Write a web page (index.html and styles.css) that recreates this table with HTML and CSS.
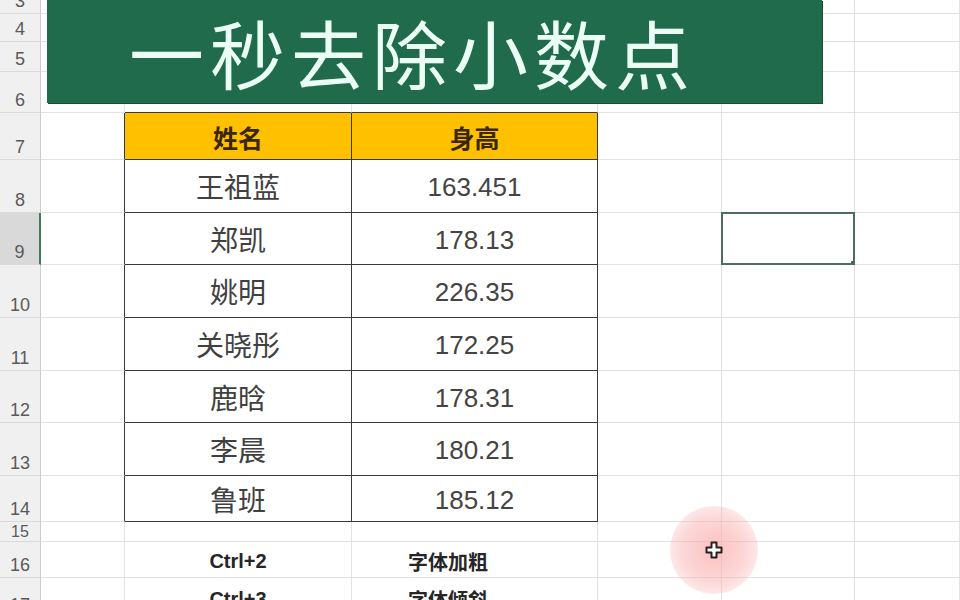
FILE: index.html
```html
<!DOCTYPE html>
<html lang="zh">
<head>
<meta charset="utf-8">
<title>一秒去除小数点</title>
<link rel="stylesheet" href="styles.css">
</head>
<body>
<div class="sheet">
  <!-- row 3 -->
  <div class="c rh">3</div><div class="c"></div><div class="c"></div><div class="c"></div><div class="c"></div><div class="c"></div><div class="c"></div>
  <!-- row 4 -->
  <div class="c rh">4</div><div class="c"></div><div class="c"></div><div class="c"></div><div class="c"></div><div class="c"></div><div class="c"></div>
  <!-- row 5 -->
  <div class="c rh">5</div><div class="c"></div><div class="c"></div><div class="c"></div><div class="c"></div><div class="c"></div><div class="c"></div>
  <!-- row 6 -->
  <div class="c rh">6</div><div class="c"></div><div class="c tt"></div><div class="c tt"></div><div class="c"></div><div class="c"></div><div class="c"></div>
  <!-- row 7 header -->
  <div class="c rh">7</div><div class="c tb"></div><div class="c tb tt th">姓名</div><div class="c tb tt th">身高</div><div class="c"></div><div class="c"></div><div class="c"></div>
  <!-- row 8 -->
  <div class="c rh">8</div><div class="c tb"></div><div class="c tb tt name">王祖蓝</div><div class="c tb tt num">163.451</div><div class="c"></div><div class="c"></div><div class="c"></div>
  <!-- row 9 -->
  <div class="c rh active">9</div><div class="c tb"></div><div class="c tb tt name">郑凯</div><div class="c tb tt num">178.13</div><div class="c"></div><div class="c sel"></div><div class="c"></div>
  <!-- row 10 -->
  <div class="c rh">10</div><div class="c tb"></div><div class="c tb tt name">姚明</div><div class="c tb tt num">226.35</div><div class="c"></div><div class="c"></div><div class="c"></div>
  <!-- row 11 -->
  <div class="c rh">11</div><div class="c tb"></div><div class="c tb tt name">关晓彤</div><div class="c tb tt num">172.25</div><div class="c"></div><div class="c"></div><div class="c"></div>
  <!-- row 12 -->
  <div class="c rh">12</div><div class="c tb"></div><div class="c tb tt name">鹿晗</div><div class="c tb tt num">178.31</div><div class="c"></div><div class="c"></div><div class="c"></div>
  <!-- row 13 -->
  <div class="c rh">13</div><div class="c tb"></div><div class="c tb tt name">李晨</div><div class="c tb tt num">180.21</div><div class="c"></div><div class="c"></div><div class="c"></div>
  <!-- row 14 -->
  <div class="c rh">14</div><div class="c tb"></div><div class="c tb tt name">鲁班</div><div class="c tb tt num">185.12</div><div class="c"></div><div class="c"></div><div class="c"></div>
  <!-- row 15 -->
  <div class="c rh small">15</div><div class="c"></div><div class="c"></div><div class="c"></div><div class="c"></div><div class="c"></div><div class="c"></div>
  <!-- row 16 -->
  <div class="c rh">16</div><div class="c"></div><div class="c key">Ctrl+2</div><div class="c desc">字体加粗</div><div class="c"></div><div class="c"></div><div class="c"></div>
  <!-- row 17 -->
  <div class="c rh">17</div><div class="c"></div><div class="c key">Ctrl+3</div><div class="c desc">字体倾斜</div><div class="c"></div><div class="c"></div><div class="c"></div>

  <div class="banner">一秒去除小数点</div>

  <div class="touch">
    <svg class="cursor" width="18" height="18" viewBox="0 0 18 18">
      <path d="M6.5 1.5h5v5h5v5h-5v5h-5v-5h-5v-5h5z" fill="#fff" stroke="#2a1f1f" stroke-width="2" stroke-linejoin="round"/>
    </svg>
  </div>
</div>
</body>
</html>
```
FILE: styles.css
```css
html, body {
  margin: 0;
  padding: 0;
  background: #fff;
}
body {
  width: 960px;
  height: 600px;
  overflow: hidden;
  font-family: "Liberation Sans", "Noto Sans CJK SC", sans-serif;
}
.sheet {
  position: relative;
  width: 960px;
  height: 600px;
  overflow: hidden;
  display: grid;
  grid-template-columns: 41px 84px 227px 246px 124px 133px 105px;
  grid-template-rows: 14px 28px 30px 41px 47px 53px 52px 53px 53px 52px 53px 46px 20px 36px 40px;
}
.c {
  box-sizing: border-box;
  border-right: 1px solid #e2e2e2;
  border-bottom: 1px solid #e2e2e2;
  display: flex;
  align-items: center;
  justify-content: center;
  overflow: hidden;
  white-space: nowrap;
}
.rh {
  background: #f0f0f0;
  border-right: 1px solid #cdcdcd;
  border-bottom: 1px solid #dadada;
  align-items: flex-end;
  font-size: 18px;
  line-height: 20px;
  color: #5a5a5a;
  padding-bottom: 2px;
}
.rh.small {
  font-size: 16px;
  line-height: 16px;
  padding-bottom: 1px;
}
.rh.active {
  background: #d9d9d9;
  border-right: 2px solid #3d7a5a;
}
.tb {
  border-right: 1px solid #383838;
}
.tt {
  border-bottom: 1px solid #383838;
}
.th {
  background: #ffc000;
  font-family: "Noto Sans CJK SC", sans-serif;
  font-weight: 700;
  font-size: 25px;
  color: #3a2600;
  padding-top: 2px;
}
.name {
  font-family: "Noto Sans CJK SC", sans-serif;
  font-size: 28px;
  color: #404040;
}
.num {
  font-size: 26px;
  color: #444;
  padding-top: 3px;
}
.key {
  font-weight: 700;
  font-size: 20px;
  color: #262626;
  padding-top: 4px;
}
.desc {
  justify-content: flex-start;
  padding-left: 56px;
  padding-top: 4px;
  font-family: "Noto Sans CJK SC", sans-serif;
  font-weight: 700;
  font-size: 20px;
  color: #262626;
}
.sel {
  position: relative;
  border: 2px solid #4d6d61;
  margin: -1px 0 0 -1px;
}
.sel::after {
  content: "";
  position: absolute;
  right: -4px;
  bottom: -4px;
  width: 6px;
  height: 6px;
  background: #3f5a50;
  border-radius: 1px;
}
.banner {
  position: absolute;
  left: 47px;
  top: 0;
  width: 775px;
  height: 103px;
  background: #1f6b4b;
  box-shadow: 1px 1px 0 #164f37;
  box-sizing: border-box;
  padding: 0 0 0 82px;
  display: flex;
  align-items: center;
  font-family: "Noto Sans CJK SC", sans-serif;
  font-weight: 400;
  font-size: 75px;
  letter-spacing: 6px;
  color: #ecfff6;
  white-space: nowrap;
}
.touch {
  position: absolute;
  left: 670px;
  top: 506px;
  width: 88px;
  height: 88px;
  border-radius: 50%;
  background: radial-gradient(circle, rgba(250, 165, 165, 0.7) 0%, rgba(250, 175, 175, 0.5) 50%, rgba(255, 205, 205, 0) 100%);
  display: flex;
  align-items: center;
  justify-content: center;
}
.cursor {
  display: block;
}
```
